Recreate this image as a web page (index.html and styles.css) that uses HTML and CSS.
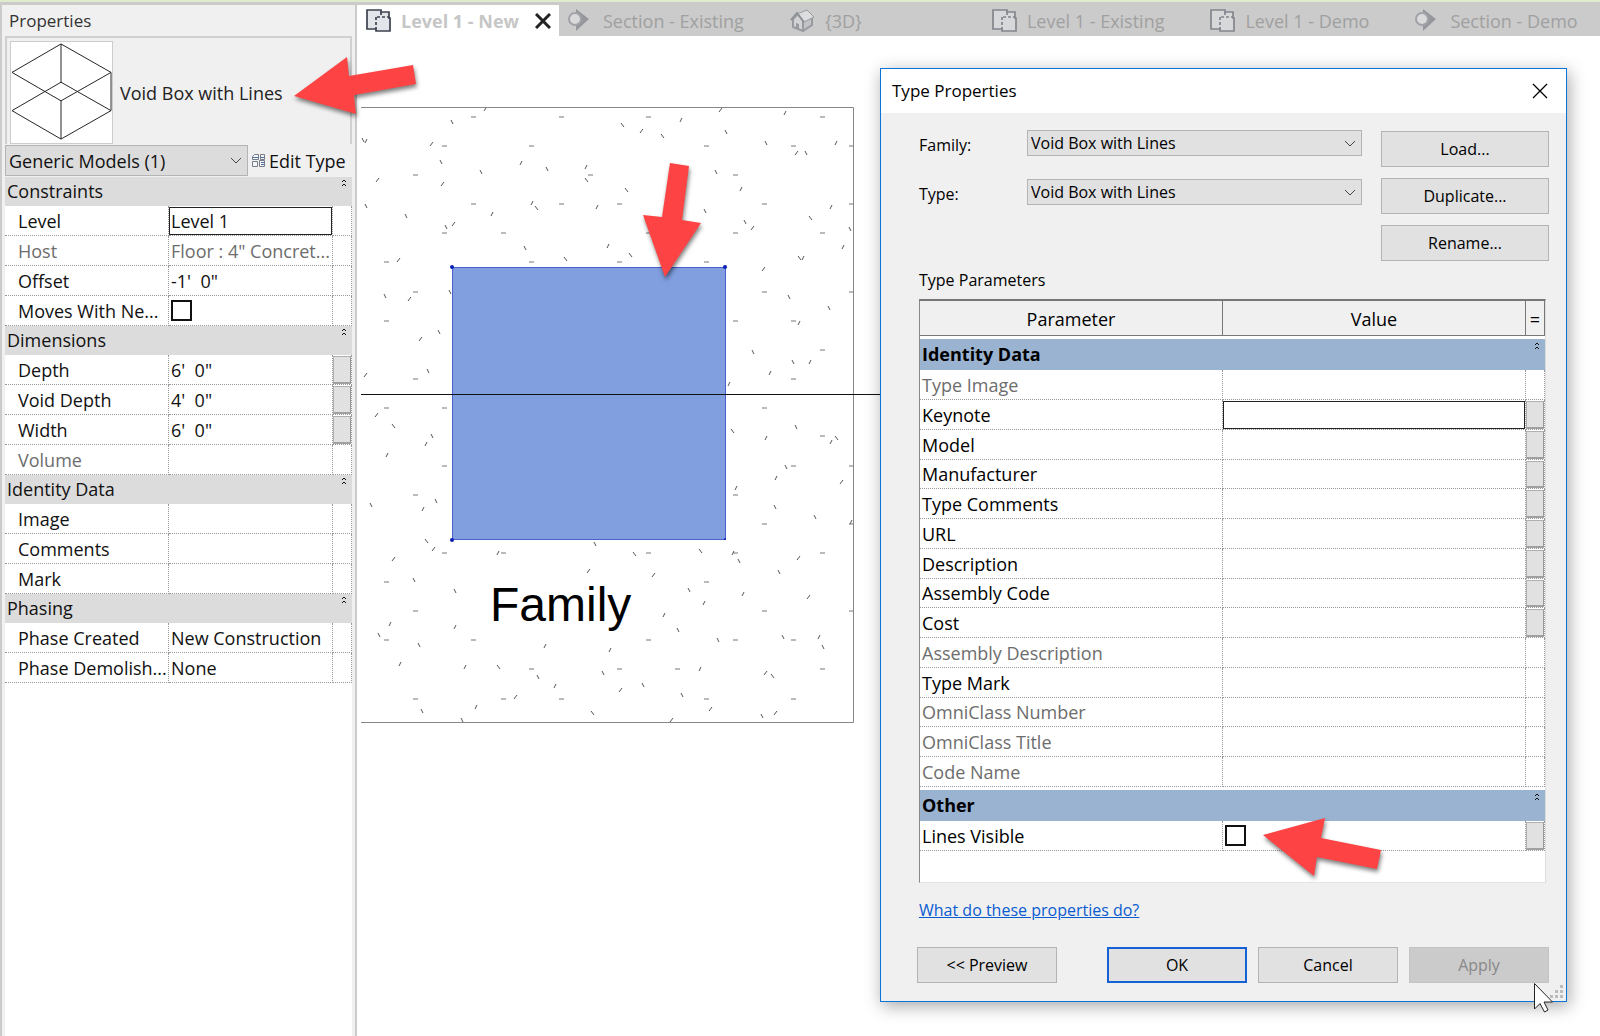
FILE: index.html
```
<!DOCTYPE html>
<html lang="en">
<head>
<meta charset="utf-8">
<title>Type Properties</title>
<link rel="stylesheet" href="styles.css">
</head>

<body>

<!-- ====================================================== -->
<!-- shared icons -->
<svg class="defs" width="0" height="0" aria-hidden="true">
<symbol id="i-plan" viewBox="0 0 25 23">
<path d="M1 1H15V3H23V9H24V22H10V20H1Z" fill="#e2e5ea" stroke="#3c424f" stroke-width="1.700"/>
<path d="M15 3V8M11 8H23M10 8V20" fill="none" stroke="#3c424f" stroke-width="1.700" stroke-dasharray="3 2"/>
</symbol>
<symbol id="i-section" viewBox="0 0 25 23">
<path d="M8 0L21 10L8 22Z" fill="#60656f"/>
<circle cx="7" cy="10" r="6" fill="#e9e9ec" stroke="#777c86" stroke-width="2"/>
</symbol>
<symbol id="i-house" viewBox="0 0 25 23">
<path d="M3 10L8 5L13 12V22L3 18Z" fill="#d9dade" stroke="#666b75" stroke-width="2"/>
<path d="M13 12L22 8V16L13 22Z" fill="#b9bcc2" stroke="#666b75" stroke-width="2"/>
<path d="M7 5L17 1L24 8L14 13Z" fill="#eef0f3" stroke="#666b75" stroke-width="1"/>
<path d="M1 11L7 4L14 13" fill="none" stroke="#555a64" stroke-width="2"/>
<path d="M6 14L9 15V20L6 19Z" fill="#666b75"/>
</symbol>
<symbol id="i-fold" viewBox="0 0 6 8">
<path d="M1 3L3 1L5 3M1 7L3 5L5 7" fill="none" stroke="#111"/>
</symbol>
<symbol id="i-down" viewBox="0 0 12 8">
<path d="M1 1L6 6L11 1" fill="none" stroke="#444"/>
</symbol>
</svg>

<div class="app">

<!-- ====================================================== -->
<aside class="panel">
<h2 class="panel-title">Properties</h2>

<div class="type-box">
<svg class="thumb" viewBox="0 0 103 103" aria-hidden="true">
<path d="M51 2L102 31L51 60L1 31ZM51 41L102 70L51 99L1 70ZM51 2V41M51 60V99M102 31V70" fill="none" stroke="#222"/>
</svg>
<span>Void Box with Lines</span>
</div>

<div class="filter">
<div class="combo">
<select aria-label="Category"><option>Generic Models (1)</option></select>
<svg class="combo-arrow"><use href="#i-down"/></svg>
</div>
<button class="edit-type">
<svg width="13" height="13" viewBox="0 0 13 13" fill="#f4f6f9" stroke="#777c88" aria-hidden="true">
<path d="M2.500 .5H6.500V5.500H.5V2.500ZM8.500 .5H12.500V5.500H8.500ZM.5 7.500H5.500V12.500H.5ZM7.500 6.500H12.500V12.500H7.500Z"/>
<path d="M.5 3.500H6M8.500 3.500H12M9 8.500H12M9 10.500H12" stroke="#4f7099"/>
</svg>
Edit Type</button>
</div>

<div class="props-wrap">
<table class="grid props">
<colgroup><col class="c-name"><col><col class="c-btn"></colgroup>

<tr class="group"><th colspan="3"><div>Constraints<button class="fold" aria-label="Collapse Constraints"><svg><use href="#i-fold"/></svg></button></div></th></tr>
<tr><td><label for="level">Level</label></td><td><input class="current" id="level" value="Level 1"></td><td></td></tr>
<tr class="off"><td>Host</td><td>Floor : 4" Concret...</td><td></td></tr>
<tr><td><label for="offset">Offset</label></td><td><input id="offset" value="-1'  0&quot;"></td><td></td></tr>
<tr><td><label for="moves">Moves With Ne...</label></td><td><input type="checkbox" id="moves"></td><td></td></tr>

<tr class="group"><th colspan="3"><div>Dimensions<button class="fold" aria-label="Collapse Dimensions"><svg><use href="#i-fold"/></svg></button></div></th></tr>
<tr><td><label for="depth">Depth</label></td><td><input id="depth" value="6'  0&quot;"></td><td><button class="assoc" aria-label="Associate Depth"></button></td></tr>
<tr><td><label for="vdepth">Void Depth</label></td><td><input id="vdepth" value="4'  0&quot;"></td><td><button class="assoc" aria-label="Associate Void Depth"></button></td></tr>
<tr><td><label for="width">Width</label></td><td><input id="width" value="6'  0&quot;"></td><td><button class="assoc" aria-label="Associate Width"></button></td></tr>
<tr class="off"><td>Volume</td><td></td><td></td></tr>

<tr class="group"><th colspan="3"><div>Identity Data<button class="fold" aria-label="Collapse Identity Data"><svg><use href="#i-fold"/></svg></button></div></th></tr>
<tr><td><label for="image">Image</label></td><td><input id="image"></td><td></td></tr>
<tr><td><label for="comments">Comments</label></td><td><input id="comments"></td><td></td></tr>
<tr><td><label for="mark">Mark</label></td><td><input id="mark"></td><td></td></tr>

<tr class="group"><th colspan="3"><div>Phasing<button class="fold" aria-label="Collapse Phasing"><svg><use href="#i-fold"/></svg></button></div></th></tr>
<tr><td><label for="created">Phase Created</label></td><td><input id="created" value="New Construction"></td><td></td></tr>
<tr><td><label for="demo">Phase Demolish...</label></td><td><input id="demo" value="None"></td><td></td></tr>
</table>
</div>
</aside>

<!-- ====================================================== -->
<main class="views">
<nav class="tabs">
<div class="tab active"><svg><use href="#i-plan"/></svg><a href="#">Level 1 - New</a>
<button class="tab-close" aria-label="Close view"><svg width="16" height="16" viewBox="0 0 16 16"><path d="M1 1L15 15M15 1L1 15" stroke="#222" stroke-width="3"/></svg></button></div>
<div class="tab"><svg><use href="#i-section"/></svg><a href="#">Section - Existing</a></div>
<div class="tab"><svg><use href="#i-house"/></svg><a href="#">{3D}</a></div>
<div class="tab"><svg><use href="#i-plan"/></svg><a href="#">Level 1 - Existing</a></div>
<div class="tab"><svg><use href="#i-plan"/></svg><a href="#">Level 1 - Demo</a></div>
<div class="tab"><svg><use href="#i-section"/></svg><a href="#">Section - Demo</a></div>
</nav>

<svg class="drawing">
<!-- concrete hatch: dashes -->
<path class="dash" d="M114 81h5M202 81h5M289 81h5M463 81h5
M85 110h5M172 110h5M347 110h5M434 110h5M492 110h4
M56 139h5M231 139h5M376 139h5
M114 168h5M202 168h5M260 168h5M405 168h5M492 168h4
M85 197h5M144 197h5M289 197h5M376 197h5M463 197h5
M27 226h5M172 226h5M260 226h5M347 226h5
M56 256h5M405 256h5M492 256h4
M27 285h5M376 285h5M434 285h5M463 314h5
M56 343h5M434 343h5M27 372h5M85 372h5M405 372h5
M463 400h5M85 430h5M434 430h5M492 430h4
M56 459h5M376 459h5M405 488h5M492 488h4
M85 517h5M144 517h5M289 517h5M376 517h5M463 517h5
M27 546h5M347 546h5M56 575h5M405 575h5M492 575h4
M27 604h5M114 604h5M289 604h5M376 604h5M434 604h5
M172 633h5M260 633h5M318 633h5M463 633h5
M56 663h5M144 663h5M202 663h5M347 663h5M434 663h5"/>
<!-- concrete hatch: forward strokes -->
<path class="speck" d="M127 75l2-3M362 76l3-4M427 79l2-4M323 86l2-4M283 97l3-4M8 107l2-4M73 110l3-4M478 109l2-4M438 119l3-4M163 129l2-4M228 133l2-4M19 146l3-4M84 150l3-4M383 155l2-4M239 173l2-4M174 169l2-4M473 173l2-4M134 180l2-4M95 190l3-4M394 194l3-4M250 212l2-4M485 213l2-4M40 226l3-4M445 224l2-4M405 235l3-4M51 265l3-4M441 289l2-4M62 305l3-4M452 328l2-4M412 339l2-4M7 341l3-4M371 350l2-4M18 381l3-4
M68 410l2-4M29 421l2-4M408 404l2-4M473 408l2-4M418 444l2-4M378 454l2-4M483 448l3-4M65 475l2-4M75 515l3-4M35 525l3-4M140 519l2-4M375 519l2-4M440 524l3-4M230 537l3-4M295 541l3-4M385 560l2-4M450 563l3-4M346 569l2-4M306 581l2-4M32 590l2-4M97 593l2-4M461 603l2-4M187 612l2-4M252 616l2-4M42 630l2-4M107 633l2-4M342 635l2-4M407 639l3-4M197 652l2-4M262 656l3-4M157 663l3-4M118 673l2-4M352 675l3-4M417 679l3-4M313 686l3-4M493 488l2-4"/>
<!-- concrete hatch: back strokes -->
<path class="speck" d="M94 84l2 4M264 87l3 4M304 98l3 4M368 94l2 4M408 105l2 4M5 102l2 4M448 115l2 4M83 124l2 4M123 134l2 4M189 131l2 4M358 134l2 4M228 142l3 4M268 152l3 4M8 168l2 4M178 170l3 4M347 173l2 4M48 178l2 4M452 180l3 4M88 189l2 4M387 184l2 4M492 191l2 4M167 210l2 4M441 220l3 4M207 221l3 4M272 217l3 4M92 254l2 4M27 258l2 4M431 259l2 4M471 270l2 4M81 294l2 4M395 314l2 4M435 324l2 4M70 333l2 4
M35 388l3 4M74 398l2 4M374 393l3 4M438 389l2 4M478 400l3 4M428 429l2 4M13 467l2 4M78 463l2 4M417 469l2 4M457 479l2 4M68 503l3 4M237 506l2 4M276 516l3 4M342 513l3 4M381 523l2 4M421 534l2 4M56 542l2 4M97 553l2 4M331 552l2 4M21 597l2 4M320 592l2 4M425 599l2 4M360 602l2 4M465 609l2 4M61 607l2 4M140 629l3 4M180 639l2 4M245 635l2 4M285 647l2 4M414 638l3 4M324 657l2 4M64 673l2 4M234 675l3 4M404 678l2 4M104 682l2 4"/>
<path class="floor" d="M4 71.500H496.500V686.500H4"/>
<rect class="void" x="95.500" y="231.500" width="273" height="272"/>
<path d="M4 358.500H900" stroke="#111"/>
<g fill="#0a1fb4"><circle cx="95" cy="231" r="2"/><circle cx="368" cy="231" r="2"/><circle cx="95" cy="504" r="2"/><circle cx="368" cy="503" r="1"/></g>
<text x="133" y="585">Family</text>
</svg>
</main>
</div>

<!-- ====================================================== -->
<section class="dialog" role="dialog" aria-labelledby="dlg_title">
<header class="dialog-head">
<h2 id="dlg_title">Type Properties</h2>
<button class="dialog-close" aria-label="Close"><svg width="16" height="16" viewBox="0 0 16 16"><path d="M1 1L15 15M15 1L1 15" stroke="#000" stroke-width="1.300"/></svg></button>
</header>

<div class="dialog-body">
<div class="picker">
<div class="picker-fields">
<label for="family">Family:</label>
<div class="combo"><select id="family"><option>Void Box with Lines</option></select><svg class="combo-arrow"><use href="#i-down"/></svg></div>
<label for="type">Type:</label>
<div class="combo"><select id="type"><option>Void Box with Lines</option></select><svg class="combo-arrow"><use href="#i-down"/></svg></div>
</div>
<div class="picker-buttons">
<button class="btn">Load...</button>
<button class="btn">Duplicate...</button>
<button class="btn">Rename...</button>
</div>
</div>

<h3>Type Parameters</h3>
<div class="params-wrap">
<table class="grid params">
<colgroup><col><col><col class="c-btn"></colgroup>
<thead><tr><th>Parameter</th><th>Value</th><th>=</th></tr></thead>
<tbody>
<tr class="group"><th colspan="3"><div>Identity Data<button class="fold" aria-label="Collapse Identity Data"><svg><use href="#i-fold"/></svg></button></div></th></tr>
</tbody>
<tbody class="rows">
<tr class="off"><td>Type Image</td><td></td><td></td></tr>
<tr><td><label for="p1">Keynote</label></td><td><input class="current" id="p1"></td><td><button class="assoc" aria-label="Associate Keynote"></button></td></tr>
<tr><td><label for="p2">Model</label></td><td><input id="p2"></td><td><button class="assoc" aria-label="Associate Model"></button></td></tr>
<tr><td><label for="p3">Manufacturer</label></td><td><input id="p3"></td><td><button class="assoc" aria-label="Associate Manufacturer"></button></td></tr>
<tr><td><label for="p4">Type Comments</label></td><td><input id="p4"></td><td><button class="assoc" aria-label="Associate Type Comments"></button></td></tr>
<tr><td><label for="p5">URL</label></td><td><input id="p5"></td><td><button class="assoc" aria-label="Associate URL"></button></td></tr>
<tr><td><label for="p6">Description</label></td><td><input id="p6"></td><td><button class="assoc" aria-label="Associate Description"></button></td></tr>
<tr><td><label for="p7">Assembly Code</label></td><td><input id="p7"></td><td><button class="assoc" aria-label="Associate Assembly Code"></button></td></tr>
<tr><td><label for="p8">Cost</label></td><td><input id="p8"></td><td><button class="assoc" aria-label="Associate Cost"></button></td></tr>
<tr class="off"><td>Assembly Description</td><td></td><td></td></tr>
<tr><td><label for="p9">Type Mark</label></td><td><input id="p9"></td><td></td></tr>
<tr class="off"><td>OmniClass Number</td><td></td><td></td></tr>
<tr class="off"><td>OmniClass Title</td><td></td><td></td></tr>
<tr class="off"><td>Code Name</td><td></td><td></td></tr>
</tbody>
<tbody>
<tr class="group"><th colspan="3"><div>Other<button class="fold" aria-label="Collapse Other"><svg><use href="#i-fold"/></svg></button></div></th></tr>
<tr><td><label for="lines">Lines Visible</label></td><td><input type="checkbox" id="lines"></td><td><button class="assoc" aria-label="Associate Lines Visible"></button></td></tr>
</tbody>
</table>
</div>

<a class="help" href="#">What do these properties do?</a>

<footer class="dialog-foot">
<button class="btn preview">&lt;&lt; Preview</button>
<button class="btn ok">OK</button>
<button class="btn">Cancel</button>
<button class="btn" disabled>Apply</button>
</footer>
</div>
<svg class="grip" width="13" height="13" fill="#bcbcbc" aria-hidden="true"><path d="M10 0h3v3h-3zM10 5h3v3h-3zM5 5h3v3h-3zM10 10h3v3h-3zM5 10h3v3h-3zM0 10h3v3h-3z"/></svg>
</section>

<!-- ====================================================== -->
<!-- callout arrows and mouse pointer -->
<svg class="marks" width="1600" height="1036" aria-hidden="true">
<g class="arrows">
<path d="M294 96L347 57L349 76L413 65L416 84L354 95L356 114Z"/>
<path d="M665 277L643 215L662 217L670 163L689 166L682 220L701 223Z"/>
<path d="M1263 835L1325 818L1321 838L1381 850L1377 869L1317 857L1314 876Z"/>
</g>
<path d="M1534.500 983.500V1009L1540 1003.500L1544.500 1012L1548 1010L1544 1002H1552.500Z" fill="#fff" stroke="#222"/>
</svg>

</body>
</html>
```

FILE: styles.css
```
/*-----------------------------------------------------------------*/
* {
    box-sizing:         border-box;
}

body {
    margin:             0;
    font:               18px/24px "Open Sans", "Noto Sans", sans-serif;
    color:              #111;
    background:         #fff;
    overflow:           hidden;
}

h2, h3 {
    margin:             0;
    font-weight:        normal;
}

button, input, select {
    font:               inherit;
    color:              inherit;
    margin:             0;
    padding:            0;
    border:             0;
    border-radius:      0;
    background:         none;
}

.defs {
    position:           absolute;
}

.app {
    display:            flex;
    gap:                2px;
    min-height:         100vh;
    padding:            3px 0 0 2px;
    border-top:         2px solid #e0ebcc;
    background:         #cbcbcb;
}

/*-----------------------------------------------------------------*/
/* properties panel */
.panel {
    display:            flex;
    flex-direction:     column;
    flex:               none;
    width:              353px;
    padding:            0 3px;
    background:         #f0f0f0;
}

.panel-title {
    padding:            4px 4px 3px;
    font-size:          17px;
    color:              #333;
}

.type-box {
    display:            flex;
    align-items:        center;
    gap:                7px;
    padding:            3px 3px 0;
    border:             2px solid #d0d0d0;
    border-bottom:      0;
    color:              #222;
}

.thumb {
    width:              103px;
    height:             103px;
    border:             1px solid #ccc;
    background:         #fff;
}

.filter {
    display:            flex;
    gap:                4px;
    padding:            1px 0;
}

.filter .combo {
    width:              243px;
}

.filter select {
    height:             31px;
    padding-left:       3px;
}

.edit-type {
    display:            flex;
    align-items:        center;
    gap:                4px;
}

.combo {
    position:           relative;
}

.combo select {
    width:              100%;
    appearance:         none;
    border:             1px solid #b4b4b4;
    background:         #e1e1e1;
}

.filter .combo select {
    background:         #dcdcdc;
}

.combo-arrow {
    position:           absolute;
    right:              6px;
    top:                calc(50% - 4px);
    width:              12px;
    height:             8px;
    pointer-events:     none;
}

/*-----------------------------------------------------------------*/
/* property tables */
.props-wrap {
    flex:               1;
    background:         #fff;
}

.grid {
    width:              100%;
    table-layout:       fixed;
    border-spacing:     0;
    background:         #fff;
}

.grid tr {
    height:             30px;
}

.grid td {
    height:             inherit;
    padding:            0 0 0 2px;
    border-right:       1px dotted #999;
    border-bottom:      1px dotted #999;
    white-space:        nowrap;
}

.grid td + td {
    padding:            0;
}

.grid td input {
    display:            block;
    width:              100%;
    height:             28px;
    padding:            0 1px;
    border:             1px solid transparent;
}

.grid td input.current {
    border-color:       #222;
}

.grid td input[type=checkbox] {
    appearance:         none;
    width:              21px;
    height:             21px;
    margin-left:        2px;
    border:             2px solid #111;
    background:         #fff;
}

.grid .off {
    color:              #6d6d6d;
}

.grid .group div {
    display:            flex;
    justify-content:    space-between;
    align-items:        flex-start;
    line-height:        29px;
}

.assoc {
    display:            block;
    width:              100%;
    height:             28px;
    border:             1px solid #b0b0b0;
    border-right-color: #999;
    border-bottom:      2px solid #a0a0a0;
    background:         #e1e1e1;
}

.fold {
    width:              6px;
    height:             8px;
    margin:             2px 2px 0;
    line-height:        0;
}

.fold svg {
    width:              6px;
    height:             8px;
}

.props .c-name {
    width:              164px;
}

.props .c-btn {
    width:              19px;
}

.props td:first-child {
    padding-left:       13px;
}

.props .off td + td {
    padding-left:       2px;
}

.props tr.group {
    height:             29px;
}

.props .group th {
    padding:            0 3px 0 2px;
    font-weight:        normal;
    background:         #dcdcdc;
}

/*-----------------------------------------------------------------*/
/* view tabs and drawing area */
.views {
    display:            flex;
    flex-direction:     column;
    flex:               1;
    min-width:          0;
    background:         #fff;
}

.tabs {
    display:            flex;
    height:             31px;
    background:         #cbcbcb;
}

.tab {
    display:            flex;
    flex:               none;
    align-items:        center;
    gap:                10px;
    min-width:          202px;
    padding:            0 37px 0 9px;
}

.tab > svg {
    width:              25px;
    height:             23px;
    opacity:            .5;
}

.tab a {
    color:              #a0a0a0;
    text-decoration:    none;
}

.tab.active {
    padding-right:      8px;
    background:         #fff;
}

.tab.active > svg {
    opacity:            1;
}

.tab.active a {
    font-weight:        bold;
    color:              #c6c6c6;
}

.tab-close, .dialog-close {
    width:              16px;
    height:             16px;
    line-height:        0;
}

.tab-close {
    margin-left:        auto;
}

.drawing {
    flex:               1;
    width:              100%;
}

.dash {
    stroke:             #777;
    stroke-width:       1;
}

.speck {
    fill:               none;
    stroke:             #555;
}

.floor {
    fill:               none;
    stroke:             #888;
}

.void {
    fill:               #819ede;
    stroke:             #4a5fd0;
}

.drawing text {
    font:               48px "Liberation Sans", Arial, sans-serif;
    fill:               #000;
}

/*-----------------------------------------------------------------*/
/* type properties dialog, floats over the view */
.dialog {
    position:           absolute;
    left:               880px;
    top:                68px;
    width:              687px;
    border:             1px solid #0a74d8;
    background:         #f0f0f0;
    box-shadow:         2px 4px 16px rgba(0, 0, 0, .35);
    font-size:          16px;
    color:              #000;
}

.dialog-head {
    display:            flex;
    align-items:        center;
    justify-content:    space-between;
    height:             44px;
    padding:            0 18px 0 11px;
    background:         #fff;
}

.dialog-head h2 {
    font-size:          17px;
}

.dialog-body {
    padding:            17px 17px 18px 38px;
}

.picker {
    display:            flex;
    gap:                19px;
}

.picker-fields {
    display:            grid;
    flex:               1;
    grid-template-columns: 108px 1fr;
    align-content:      start;
    row-gap:            22px;
}

.picker-fields label {
    padding-top:        3px;
}

.picker-fields select {
    height:             26px;
    padding-left:       3px;
}

.picker-buttons {
    display:            flex;
    flex-direction:     column;
    gap:                11px;
    width:              168px;
    padding-top:        1px;
}

.btn {
    height:             36px;
    border:             1px solid #b4b4b4;
    background:         #e1e1e1;
}

.btn:disabled {
    color:              #888;
    border-color:       #c4c4c4;
    background:         #cbcbcb;
}

.dialog h3 {
    padding:            7px 0;
    font-size:          16px;
}

/* sunken frame */
.params-wrap {
    margin-right:       3px;
    padding-bottom:     31px;
    border:             1px solid #888;
    border-top:         2px solid #777;
    border-right-color: #ddd;
    border-bottom-color: #e3e3e3;
    background:         #fff;
    font-size:          18px;
}

.params .c-btn {
    width:              19px;
}

.params thead tr {
    height:             35px;
}

.params thead th {
    padding:            2px 0 0;
    border-right:       1px solid #777;
    border-bottom:      1px solid #777;
    font-weight:        normal;
    background:         #f0f0f0;
}

.params tr.group {
    height:             34px;
}

.params .group th {
    padding:            0 3px 0 2px;
    border-top:         3px solid #fff;
    background:         #9ab3d1;
}

.params .rows tr:nth-child(4n) {
    height:             29px;
}

.params .rows tr:nth-child(4n) input, .params .rows tr:nth-child(4n) .assoc {
    height:             27px;
}

.help {
    display:            inline-block;
    margin-top:         15px;
    color:              #0a5bd0;
}

.dialog-foot {
    display:            flex;
    gap:                11px;
    margin:             25px 0 0 -2px;
}

.dialog-foot .btn {
    width:              140px;
}

.dialog-foot .preview {
    margin-right:       auto;
}

.dialog-foot .ok {
    border:             2px solid #1560d4;
}

.grip {
    position:           absolute;
    right:              3px;
    bottom:             3px;
}

/*-----------------------------------------------------------------*/
/* overlay */
.marks {
    position:           absolute;
    left:               0;
    top:                0;
    pointer-events:     none;
}

.arrows {
    fill:               #fd4343;
    filter:             drop-shadow(1px 3px 2px rgba(0, 0, 0, .5));
}
```
